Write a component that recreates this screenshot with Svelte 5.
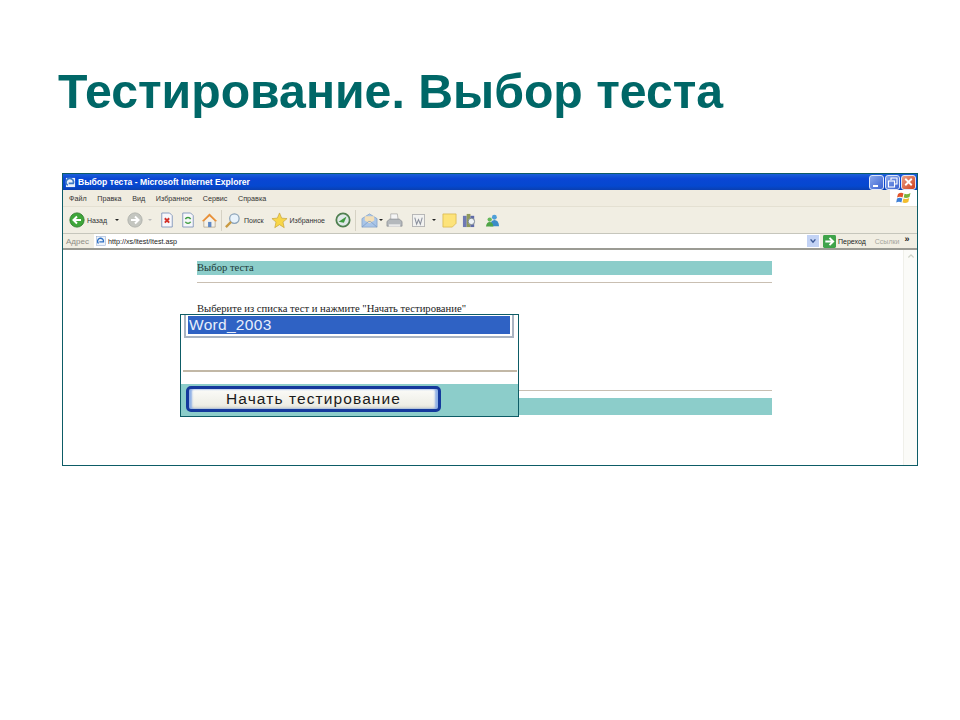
<script>
  const menus = ["Файл", "Правка", "Вид", "Избранное", "Сервис", "Справка"];
</script>

<main class="slide">
  <h1>Тестирование. Выбор теста</h1>

  <section class="window">
    <header class="titlebar">
      <svg class="ie-small" viewBox="0 0 12 12" width="11" height="11">
        <rect x="1" y="1" width="10" height="10" fill="#e8f0fa" />
        <path d="M3 9 A4 4 0 1 1 9 7 H4" fill="none" stroke="#3a78c8" stroke-width="1.8" />
      </svg>
      <span class="title-text">Выбор теста - Microsoft Internet Explorer</span>
      <div class="win-buttons">
        <span class="wb blue"><i class="min"></i></span>
        <span class="wb blue">
          <svg viewBox="0 0 13 13" width="13" height="13">
            <path d="M5 4 V2 H11 V8 H9" fill="none" stroke="#fff" stroke-width="1.1" />
            <rect x="2.5" y="5" width="6" height="6" fill="none" stroke="#fff" stroke-width="1.1" />
          </svg>
        </span>
        <span class="wb red">
          <svg viewBox="0 0 14 14" width="14" height="14">
            <path d="M3.5 3.5 L10.5 10.5 M10.5 3.5 L3.5 10.5" stroke="#fff" stroke-width="2" />
          </svg>
        </span>
      </div>
    </header>

    <nav class="menubar">
      {#each menus as m}
        <span>{m}</span>
      {/each}
      <div class="flag">
        <svg viewBox="0 0 16 14" width="16" height="14">
          <path d="M2 3 Q5 1 7.5 2.5 L6.5 6.5 Q4 5 1 6.5Z" fill="#e2542b" />
          <path d="M8.5 2.8 Q11 4 14.5 2 L13.5 6 Q10.5 7.5 7.7 6.5Z" fill="#7bb43a" />
          <path d="M1 7.5 Q4 6 6.3 7.5 L5.4 11.5 Q3 10 0.2 11.5Z" fill="#3d7fd6" />
          <path d="M7.4 7.5 Q10 8.5 13.2 7 L12.3 11 Q9.5 12.6 6.5 11.5Z" fill="#f2bd2e" />
        </svg>
      </div>
    </nav>

    <div class="toolbar">
      <svg class="ic back" viewBox="0 0 18 18" width="16" height="16">
        <circle cx="9" cy="9" r="8" fill="#3fa63a" stroke="#2b7d2b" />
        <path d="M13.5 9 H6 M9 5 L5 9 L9 13" fill="none" stroke="#fff" stroke-width="2.2" />
      </svg>
      <span class="tb-label">Назад</span>
      <i class="caret first"></i>
      <svg class="ic fwd" viewBox="0 0 18 18" width="16" height="16">
        <circle cx="9" cy="9" r="8" fill="#c4c6c0" stroke="#aeb0aa" />
        <path d="M4.5 9 H12 M9 5 L13 9 L9 13" fill="none" stroke="#fff" stroke-width="2.2" />
      </svg>
      <i class="caret pale"></i>
      <svg class="ic stop" viewBox="0 0 16 18" width="14" height="16">
        <path d="M2 1 H11 L14 4 V17 H2Z" fill="#f7f7fb" stroke="#7f93b8" />
        <path d="M5.5 7 L10.5 12 M10.5 7 L5.5 12" stroke="#d4322a" stroke-width="2.2" />
      </svg>
      <svg class="ic refresh" viewBox="0 0 16 18" width="14" height="16">
        <path d="M2 1 H11 L14 4 V17 H2Z" fill="#f7f7fb" stroke="#7f93b8" />
        <path d="M5 8 A3.4 3.4 0 0 1 11 8 M11 11 A3.4 3.4 0 0 1 5 11" fill="none" stroke="#3b9b3b" stroke-width="1.7" />
      </svg>
      <svg class="ic home" viewBox="0 0 18 18" width="17" height="17">
        <path d="M3 9 V16 H15 V9 L9 3Z" fill="#f5f2ea" stroke="#a79a80" stroke-width="0.7" />
        <path d="M1 9.5 L9 1.5 L17 9.5 L15 10 L9 4.5 L3 10Z" fill="#e8913a" />
        <rect x="7.5" y="10.5" width="3.5" height="5.5" fill="#5f88c4" />
      </svg>
      <i class="sep"></i>
      <svg class="ic search" viewBox="0 0 18 18" width="17" height="17">
        <circle cx="11" cy="7" r="5" fill="#e9f3fb" stroke="#8aa2b8" stroke-width="1.3" />
        <path d="M7.5 10.5 L2 16" stroke="#c99a42" stroke-width="2.4" />
      </svg>
      <span class="tb-label">Поиск</span>
      <svg class="ic star" viewBox="0 0 18 18" width="17" height="17">
        <path d="M9 1 L11.3 6.5 L17 7 L12.7 10.7 L14 16.6 L9 13.4 L4 16.6 L5.3 10.7 L1 7 L6.7 6.5Z" fill="#f8d648" stroke="#c4a23a" stroke-width="0.7" />
      </svg>
      <span class="tb-label">Избранное</span>
      <svg class="ic media" viewBox="0 0 18 18" width="16" height="16">
        <circle cx="9" cy="9" r="7.5" fill="#dfe8e8" stroke="#4f7f4f" stroke-width="2" />
        <path d="M4 11 L13 5 L10 12Z" fill="#3f9b3f" />
      </svg>
      <i class="sep"></i>
      <svg class="ic mail" viewBox="0 0 18 18" width="17" height="17">
        <path d="M1 7 L9 2 L17 7 V16 H1Z" fill="#a9c5e8" stroke="#7c9cc4" stroke-width="0.7" />
        <path d="M4 9 V4.5 H14 V9 L9 12Z" fill="#f3dfb8" />
        <path d="M1 16 L8 10 H10 L17 16" fill="none" stroke="#7c9cc4" stroke-width="0.8" />
      </svg>
      <i class="caret small-gap"></i>
      <svg class="ic print" viewBox="0 0 18 18" width="17" height="17">
        <path d="M5 2 H12 L13 9 H5Z" fill="#f5f5f5" stroke="#a0a0a0" stroke-width="0.7" />
        <path d="M1 10 L4 7.5 H14 L17 10 V15 H1Z" fill="#b4b8bc" stroke="#85898d" stroke-width="0.7" />
        <rect x="3" y="13" width="12" height="2.5" fill="#e8e8e8" />
      </svg>
      <svg class="ic edit" viewBox="0 0 14 14" width="13" height="13">
        <rect x="0.5" y="0.5" width="13" height="13" fill="#f2f2f0" stroke="#b4b4b4" />
        <path d="M3 4 L5 11 L7 6 L9 11 L11 4" fill="none" stroke="#8a8f9c" stroke-width="1.1" />
      </svg>
      <i class="caret word"></i>
      <svg class="ic note" viewBox="0 0 16 16" width="15" height="15">
        <path d="M1 1 H15 V11 L11 15 H1Z" fill="#fde37a" stroke="#d9b64a" stroke-width="0.8" />
      </svg>
      <svg class="ic research" viewBox="0 0 16 16" width="15" height="15">
        <rect x="1" y="3" width="4" height="12" fill="#6f79b4" />
        <rect x="5" y="1" width="4" height="14" fill="#8f9a5a" />
        <rect x="9" y="3" width="4" height="12" fill="#5f6aa8" />
        <circle cx="10" cy="9" r="3.4" fill="#eef2f6" stroke="#7d8790" />
      </svg>
      <svg class="ic msn" viewBox="0 0 16 16" width="15" height="15">
        <circle cx="10" cy="4.5" r="2.6" fill="#4f9fd8" />
        <path d="M5.5 14 Q6 7.5 10 7.5 Q14.5 7.5 15 14Z" fill="#3c8cc8" />
        <circle cx="5" cy="7" r="2.3" fill="#65b85a" />
        <path d="M1 14.5 Q1.5 9.5 5 9.5 Q8.5 9.5 9 14.5Z" fill="#4fa447" />
      </svg>
    </div>

    <div class="addressbar">
      <span class="addr-label">Адрес</span>
      <div class="addr-input">
        <svg viewBox="0 0 12 12" width="10" height="10">
          <rect x="0.5" y="0.5" width="11" height="11" fill="#eef3fa" stroke="#8ba3c9" stroke-width="0.6" />
          <path d="M3 9 A3.6 3.6 0 1 1 9 7 H4" fill="none" stroke="#2f71c4" stroke-width="1.6" />
        </svg>
        <span class="url">http://xs/ltest/ltest.asp</span>
        <span class="dropdown">
          <svg viewBox="0 0 10 10" width="8" height="8">
            <path d="M2 3 L5 6.5 L8 3" fill="none" stroke="#3d5a96" stroke-width="1.8" />
          </svg>
        </span>
      </div>
      <svg class="go" viewBox="0 0 14 14" width="13" height="13">
        <rect width="14" height="14" rx="1.5" fill="#3fa34a" />
        <path d="M2.5 7 H10 M7 3 L11 7 L7 11" fill="none" stroke="#fff" stroke-width="2" />
      </svg>
      <span class="go-label">Переход</span>
      <span class="links">Ссылки</span>
      <span class="chev">»</span>
    </div>

    <div class="viewport">
      <div class="page">
        <div class="band">Выбор теста</div>
        <hr />
        <p>Выберите из списка тест и нажмите "Начать тестирование"</p>
        <div class="filler"></div>
        <hr class="lower" />
        <div class="band bottom"></div>
      </div>
      <div class="scrollbar">
        <svg viewBox="0 0 10 8" width="8" height="6">
          <path d="M1.5 6 L5 2.5 L8.5 6" fill="none" stroke="#cfd3c8" stroke-width="1.6" />
        </svg>
      </div>
    </div>

    <aside class="zoomed">
      <div class="listbox"><div class="option">Word_2003</div></div>
      <hr />
      <div class="action">
        <button type="button">Начать тестирование</button>
      </div>
    </aside>
  </section>
</main>

<style>
  :global(body) {
    margin: 0;
    background: #fff;
  }

  .slide {
    width: 960px;
    height: 720px;
    padding: 66px 42px 0 58px;
    box-sizing: border-box;
    font-family: "Liberation Sans", Arial, sans-serif;
  }

  h1 {
    margin: 0 0 56px;
    color: #006767;
    font-size: 48.2px;
    line-height: 51px;
    font-weight: 700;
    white-space: nowrap;
  }

  .window {
    position: relative;
    margin-left: 4px;
    width: 856px;
    height: 293px;
    box-sizing: border-box;
    border: 1px solid #0d5c66;
    display: flex;
    flex-direction: column;
    background: #fff;
  }

  .titlebar {
    height: 16px;
    flex: none;
    display: flex;
    align-items: center;
    gap: 2px;
    padding: 0 1px 0 2px;
    background: linear-gradient(#1a5fd8, #0a46d4 30%, #0548cf 75%, #0a3fb0);
  }

  .title-text {
    color: #fff;
    font-size: 8.6px;
    font-weight: 700;
    white-space: nowrap;
  }

  .win-buttons {
    margin-left: auto;
    display: flex;
    gap: 1px;
  }

  .wb {
    width: 15px;
    height: 15px;
    box-sizing: border-box;
    border: 1px solid #dfe6f6;
    border-radius: 3px;
    position: relative;
    display: flex;
    align-items: center;
    justify-content: center;
  }

  .wb.blue {
    background: linear-gradient(135deg, #8aa8ec, #3a62d0);
  }

  .wb.red {
    background: linear-gradient(135deg, #e8a088, #d0401c);
  }

  .min {
    position: absolute;
    left: 3px;
    bottom: 2px;
    width: 5px;
    height: 2px;
    background: #fff;
  }

  .menubar {
    height: 17px;
    flex: none;
    display: flex;
    align-items: center;
    gap: 10.6px;
    padding-left: 6px;
    background: #f0ece0;
    border-bottom: 1px solid #e4e0d2;
    box-sizing: border-box;
    font-size: 7.2px;
    color: #333;
  }

  .flag {
    margin-left: auto;
    width: 27px;
    height: 100%;
    background: #fff;
    display: flex;
    align-items: center;
    justify-content: center;
  }

  .toolbar {
    height: 27px;
    flex: none;
    display: flex;
    align-items: center;
    padding-left: 6px;
    background: #f1eee3;
    border-bottom: 1px solid #c6c6bc;
    box-sizing: border-box;
    font-size: 7px;
    color: #333;
  }

  .tb-label {
    white-space: nowrap;
  }

  .back {
    margin-right: 2px;
  }

  .caret {
    width: 0;
    height: 0;
    border-left: 2px solid transparent;
    border-right: 2px solid transparent;
    border-top: 2px solid #222;
  }

  .caret.first {
    margin: 0 8px;
  }

  .caret.pale {
    margin: 0 8px 0 5px;
    border-top-color: #bbb;
  }

  .caret.small-gap {
    margin: 0 3px 0 1px;
  }

  .caret.word {
    margin: 0 6px 0 7px;
  }

  .stop {
    margin-right: 7px;
  }

  .refresh {
    margin-right: 6px;
  }

  .sep {
    width: 1px;
    height: 21px;
    background: #d6d2c4;
    margin: 0 2px 0 3px;
  }

  .search {
    margin-right: 3px;
  }

  .tb-label + .star {
    margin-left: 8px;
  }

  .star {
    margin-right: 1px;
  }

  .media {
    margin-left: 10px;
    margin-right: 1px;
  }

  .mail {
    margin-left: 3px;
  }

  .print {
    margin-right: 9px;
  }

  .note {
    margin-right: 5px;
  }

  .research {
    margin-right: 8px;
  }

  .addressbar {
    height: 16px;
    flex: none;
    display: flex;
    align-items: center;
    background: #f1eee3;
    border-bottom: 2px solid #9b9b94;
    box-sizing: border-box;
    font-size: 7px;
    padding-left: 3px;
  }

  .addr-label {
    color: #8d8d85;
    width: 28px;
    font-size: 8px;
  }

  .addr-input {
    width: 726px;
    height: 14px;
    display: flex;
    align-items: center;
    gap: 2px;
    padding-left: 2px;
    background: #fff;
    box-sizing: border-box;
    color: #222;
  }

  .url {
    font-size: 7.2px;
  }

  .dropdown {
    margin-left: auto;
    width: 12px;
    height: 12px;
    margin-right: 1px;
    background: #c3d3f5;
    display: flex;
    align-items: center;
    justify-content: center;
  }

  .go {
    margin-left: 3px;
  }

  .go-label {
    margin-left: 2px;
    color: #222;
  }

  .links {
    margin-left: 9px;
    color: #a5a59c;
  }

  .chev {
    margin-left: 5px;
    font-size: 9px;
    font-weight: 700;
    line-height: 9px;
    position: relative;
    top: -2px;
    color: #222;
  }

  .viewport {
    flex: 1;
    display: flex;
    min-height: 0;
  }

  .page {
    flex: 1;
    padding: 11px 0 0 134px;
    font-family: "Liberation Serif", "Times New Roman", serif;
    font-size: 10.65px;
    color: #222;
  }

  .band {
    width: 575px;
    height: 14px;
    line-height: 14px;
    background: #8ccdca;
    color: #1c3a38;
  }

  .band.bottom {
    height: 17px;
  }

  hr {
    width: 575px;
    height: 1px;
    margin: 7px 0 0;
    border: 0;
    background: #c9bfb2;
  }

  p {
    margin: 20px 0 0;
    line-height: 11px;
  }

  .filler {
    height: 76px;
  }

  hr.lower {
    margin: 0 0 7px;
  }

  .scrollbar {
    width: 13px;
    display: flex;
    justify-content: center;
    padding-top: 3px;
    background: #fbfbf8;
    border-left: 1px solid #f0f0ea;
    box-sizing: content-box;
  }

  .zoomed {
    position: absolute;
    left: 117px;
    top: 140px;
    width: 339px;
    height: 103px;
    box-sizing: border-box;
    border: 1px solid #0d5c66;
    background: #fff;
    font-family: "Liberation Sans", Arial, sans-serif;
  }

  .listbox {
    margin-left: 3px;
    width: 330px;
    height: 23px;
    box-sizing: border-box;
    padding: 1px 2px 2px;
    background: #fff;
    border: 2px solid #aab4c2;
    border-top: 0;
  }

  .option {
    height: 18px;
    line-height: 18px;
    padding-left: 1px;
    background: #2f62c4;
    color: #e8eefb;
    font-size: 15.5px;
    letter-spacing: 0.3px;
  }

  .zoomed hr {
    width: 334px;
    height: 2px;
    margin: 32px 0 0 2px;
    background: #c2b8a6;
  }

  .action {
    margin-top: 12px;
    height: 32px;
    background: #8ccdca;
    padding: 2px 0 0 5px;
    box-sizing: border-box;
  }

  button {
    display: block;
    width: 255px;
    height: 26px;
    padding: 0 0 1px;
    box-sizing: border-box;
    border: 3px solid #14399c;
    border-radius: 5px;
    background: linear-gradient(#fbfbf8, #eeeee6 80%, #d8d8cc);
    box-shadow: inset 3px 0 2px #8fb0e6, inset -3px 0 2px #8fb0e6;
    color: #1a1a1a;
    font-family: inherit;
    font-size: 15.5px;
    letter-spacing: 1.1px;
    line-height: 20px;
  }
</style>
